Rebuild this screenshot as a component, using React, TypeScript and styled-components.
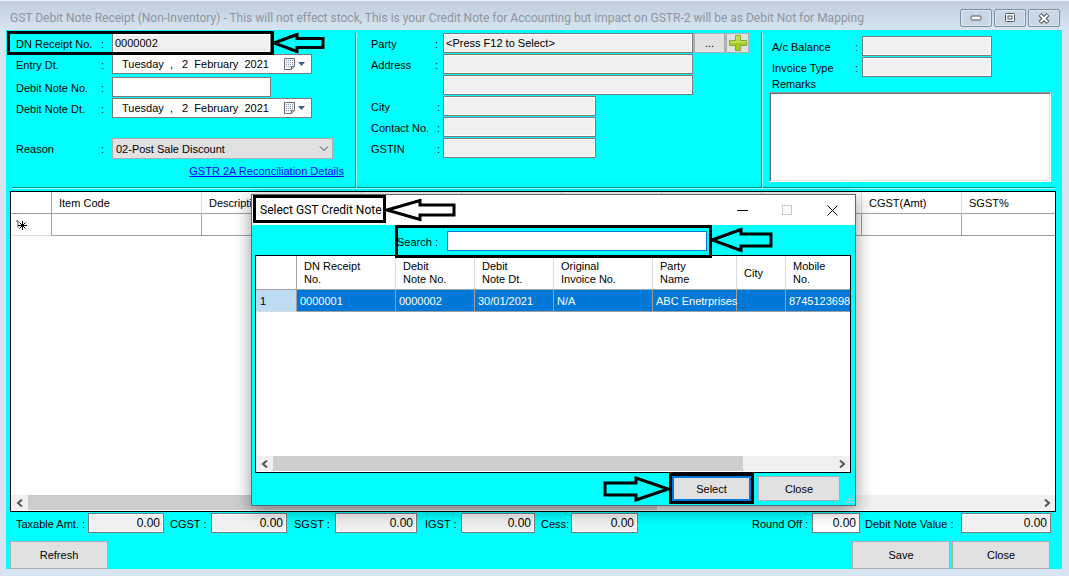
import React from "react";
import styled, { createGlobalStyle, css } from "styled-components";

const CYAN = "#00ffff";
const BLUE = "#0078d7";
const UI_FONT = '"Liberation Sans", Arial, sans-serif';
const TITLE_FONT = 'Roboto, "Noto Sans", sans-serif';

const GlobalStyle = createGlobalStyle`
  *, *::before, *::after { box-sizing: border-box; }
  body { margin: 0; background: #d7e4f2; }
  body, button, input, select, textarea { font-family: ${UI_FONT}; font-size: 11px; line-height: 14px; color: #000; }
  button, input, select, textarea { margin: 0; border-radius: 0; outline: none; }
`;

/* ---------- window frame ---------- */

const Window = styled.div`
  position: relative;
  display: flex;
  flex-direction: column;
  min-height: 100vh;
  padding: 0 7px 7px 6px;
  background: #d7e4f2;
  border-top: 1px solid #eef3f8;
`;

const TitleBar = styled.header`
  display: flex;
  align-items: center;
  height: 29px;
  margin: 0 -7px 0 -6px;
  padding: 5px 9px 0 10px;
  background: linear-gradient(#bfcddb, #d7e4f2);
`;

const WindowTitle = styled.h1`
  flex: 1;
  margin: 0;
  overflow: hidden;
  white-space: nowrap;
  font: 400 12px/16px ${TITLE_FONT};
  color: #8f959c;
`;

const Captions = styled.div`
  display: flex;
  gap: 2px;
`;

const CaptionButton = styled.button`
  display: flex;
  align-items: center;
  justify-content: center;
  width: 32px;
  height: 18px;
  padding: 0;
  border: 1px solid #7f8da3;
  border-radius: 2px;
  background: #c9d6e5;
  box-shadow: inset 0 0 0 1px #dde7f2;
`;

const Body = styled.main`
  display: flex;
  flex: 1;
  flex-direction: column;
  padding: 3px 6px 0 4px;
  background: ${CYAN};
`;

/* ---------- form area ---------- */

const FormArea = styled.section`
  display: grid;
  grid-template-columns: 345fr 406fr 292fr;
  height: 156px;
  margin: 0 1px 2px 2px;
  border-bottom: 1px solid #a8ffff;
  box-shadow: inset 0 -1px 0 #009c9c;
`;

const Column = styled.div<{ $left: number; $top?: number; $last?: boolean }>`
  display: flex;
  flex-direction: column;
  min-width: 0;
  padding: ${(p) => p.$top ?? 0}px 0 0 ${(p) => p.$left}px;
  ${(p) =>
    !p.$last &&
    css`
      border-right: 1px solid #a8ffff;
      box-shadow: inset -1px 0 0 #009c9c;
    `}
`;

const Group = styled.div<{ $gap?: number; $indent?: number }>`
  display: flex;
  flex-direction: column;
  align-items: flex-start;
  gap: 1px;
  margin-bottom: ${(p) => p.$gap ?? 0}px;
  padding-left: ${(p) => p.$indent ?? 0}px;
`;

const Row = styled.div<{ $indent?: number }>`
  display: flex;
  align-items: center;
  padding-left: ${(p) => p.$indent ?? 0}px;
`;

const Label = styled.label<{ $width: number; $colon?: number }>`
  display: flex;
  flex: none;
  justify-content: space-between;
  width: ${(p) => p.$width}px;
  padding: 1px ${(p) => p.$colon ?? 8}px 0 0;
  white-space: nowrap;
`;

const Field = styled.input<{ $width: number; $editable?: boolean }>`
  width: ${(p) => p.$width}px;
  height: 20px;
  padding: 0 2px;
  border: 1px solid #7a7a7a;
  background: ${(p) => (p.$editable ? "#fff" : "#f0f0f0")};
  box-shadow: inset 0 0 0 1px #fff;
`;

const DateBox = styled.div`
  display: flex;
  align-items: center;
  width: 200px;
  height: 20px;
  border: 1px solid #7a7a7a;
  background: #fff;
`;

const DateInput = styled.input`
  flex: 1;
  min-width: 0;
  padding: 0 0 0 9px;
  border: 0;
  background: transparent;
  white-space: pre;
`;

const DateButton = styled.button`
  display: flex;
  width: 28px;
  padding: 0;
  border: 0;
  background: transparent;
`;

const SelectBox = styled.div`
  position: relative;
  width: 221px;
`;

const Select = styled.select`
  display: block;
  width: 100%;
  height: 21px;
  padding: 0 18px 0 3px;
  appearance: none;
  border: 1px solid #adadad;
  background: #e1e1e1;
`;

const SelectArrow = styled.svg`
  position: absolute;
  top: 8px;
  right: 4px;
  pointer-events: none;
`;

const ReportLink = styled.a`
  align-self: flex-end;
  margin: 5px 12px 0 0;
  color: #0000ff;
`;

const PickButton = styled.button<{ $width: number }>`
  display: flex;
  align-items: center;
  justify-content: center;
  width: ${(p) => p.$width}px;
  height: 20px;
  margin-left: 1px;
  padding: 0;
  border: 1px solid #adadad;
  background: #e1e1e1;
`;

const RemarksLabel = styled.label`
  padding-left: 3px;
`;

const Remarks = styled.textarea`
  display: block;
  height: 90px;
  margin: 1px 4px 0 0;
  padding: 2px;
  resize: none;
  border: 1px solid;
  border-color: #a0a0a0 #fff #fff #a0a0a0;
  background: #fff;
  box-shadow: inset 1px 1px 0 #696969, inset -1px -1px 0 #e3e3e3;
`;

/* ---------- data grids ---------- */

const GridFrame = styled.div`
  display: flex;
  flex: 1;
  flex-direction: column;
  min-width: 0;
  overflow: hidden;
  border: 1px solid #000;
  background: #fff;
`;

const GridArea = styled.div`
  flex: 1;
  overflow: hidden;
`;

const Grid = styled.table<{ $width: number }>`
  width: ${(p) => p.$width}px;
  table-layout: fixed;
  border-collapse: separate;
  border-spacing: 0;
`;

const HeadCell = styled.th<{ $tall?: boolean }>`
  height: ${(p) => (p.$tall ? 34 : 22)}px;
  padding: 1px 0 0 7px;
  border-right: 1px solid #dcdcdc;
  border-bottom: 1px solid #a0a0a0;
  font-weight: 400;
  line-height: 13px;
  text-align: left;
  white-space: pre;
  &:first-child { border-right-color: #a0a0a0; }
`;

const Cell = styled.td<{ $selected?: boolean }>`
  height: 22px;
  padding: 0 0 0 3px;
  border-right: 1px solid #a0a0a0;
  border-bottom: 1px solid #a0a0a0;
  white-space: nowrap;
  ${(p) =>
    p.$selected &&
    css`
      background: ${BLUE};
      color: #fff;
    `}
`;

const RowHead = styled.th<{ $selected?: boolean }>`
  height: 22px;
  padding: 0 0 0 4px;
  border-right: 1px solid #a0a0a0;
  border-bottom: 1px solid #dcdcdc;
  background: ${(p) => (p.$selected ? "#bcdcf4" : "#fff")};
  font-weight: 400;
  text-align: left;
  svg { display: block; }
`;

const ScrollBar = styled.div`
  display: flex;
  height: 16px;
  border-bottom: 1px solid #fff;
  background: #f0f0f0;
`;

const ScrollButton = styled.button`
  display: flex;
  align-items: center;
  justify-content: center;
  width: 17px;
  padding: 0;
  border: 0;
  background: transparent;
`;

const ScrollTrack = styled.div`
  flex: 1;
`;

const Thumb = styled.div<{ $share: number }>`
  width: ${(p) => p.$share}%;
  height: 100%;
  background: #cdcdcd;
`;

/* ---------- totals and actions ---------- */

const Totals = styled.div`
  display: flex;
  align-items: center;
  margin: 1px 5px 8px 6px;
`;

const Amount = styled(Field)`
  padding: 0 3px;
  font-size: 12px;
  text-align: right;
`;

const Spacer = styled.div`
  flex: 1;
`;

const Actions = styled.div`
  display: flex;
  gap: 2px;
  margin-right: 6px;
`;

const Button = styled.button<{ $width: number; $height: number; $focused?: boolean }>`
  width: ${(p) => p.$width}px;
  height: ${(p) => p.$height}px;
  padding: 0;
  border: ${(p) => (p.$focused ? `2px solid ${BLUE}` : "1px solid #adadad")};
  background: #e1e1e1;
`;

/* ---------- highlight boxes with pointers ---------- */

const Marked = styled.div`
  position: relative;
  display: flex;
  align-items: center;
`;

const Frame = styled.span<{ $inset: string }>`
  position: absolute;
  z-index: 1;
  inset: ${(p) => p.$inset};
  border: 3px solid #000;
  pointer-events: none;
`;

const PointerSvg = styled.svg<{ $side: "left" | "right"; $gap: number }>`
  position: absolute;
  z-index: 2;
  top: 50%;
  ${(p) => (p.$side === "right" ? "left" : "right")}: calc(100% + ${(p) => p.$gap}px);
  transform: translateY(-50%);
  pointer-events: none;
`;

type PointerProps = {
  side: "left" | "right";
  width: number;
  height: number;
  head: number;
  body: number;
  gap: number;
};

function Pointer({ side, width: w, height: h, head, body, gap }: PointerProps) {
  const m = h / 2;
  const pts =
    side === "right"
      ? [[2, m], [head, 2], [head, m - body / 2], [w - 2, m - body / 2], [w - 2, m + body / 2], [head, m + body / 2], [head, h - 2]]
      : [[w - 2, m], [w - head, 2], [w - head, m - body / 2], [2, m - body / 2], [2, m + body / 2], [w - head, m + body / 2], [w - head, h - 2]];
  return (
    <PointerSvg $side={side} $gap={gap} width={w} height={h} aria-hidden="true">
      <polygon points={pts.map((p) => p.join(",")).join(" ")} fill="none" stroke="#000" strokeWidth="3" />
    </PointerSvg>
  );
}

/* ---------- dialog ---------- */

const Dialog = styled.section`
  position: absolute;
  top: 193px;
  left: 251px;
  z-index: 5;
  display: flex;
  flex-direction: column;
  width: 605px;
  height: 312px;
  border: 1px solid #5c6a6c;
  background: ${CYAN};
  box-shadow: 0 4px 16px rgba(0, 0, 0, 0.42);
`;

const DialogBar = styled.header`
  display: flex;
  align-items: center;
  justify-content: space-between;
  height: 30px;
  padding: 0 0 0 8px;
  background: #fff;
`;

const DialogTitle = styled.h2`
  margin: 0;
  font: 400 12px/16px ${TITLE_FONT};
  white-space: nowrap;
`;

const DialogControls = styled.div`
  display: flex;
`;

const DialogControl = styled.button`
  display: flex;
  align-items: center;
  justify-content: center;
  width: 45px;
  height: 30px;
  padding: 0;
  border: 0;
  background: transparent;
`;

const SearchBar = styled.div`
  display: flex;
  justify-content: center;
  height: 30px;
`;

const SearchBox = styled(Marked)`
  width: 317px;
  padding: 2px 5px 0 2px;
`;

const SearchInput = styled.input`
  flex: 1;
  min-width: 0;
  height: 20px;
  border: 1px solid ${BLUE};
  background: #fff;
`;

const DialogGrid = styled(GridFrame)`
  margin: 0 4px 0 3px;
`;

const DialogFooter = styled.footer`
  display: flex;
  justify-content: flex-end;
  gap: 7px;
  padding: 3px 15px 4px 0;
`;

const Grip = styled.svg`
  position: absolute;
  right: 1px;
  bottom: 1px;
`;

/* ---------- pieces ---------- */

function Chevron({ dir }: { dir: "left" | "right" }) {
  return (
    <svg width="8" height="8" aria-hidden="true">
      <path d={dir === "left" ? "M6 0.500L2 4L6 7.500" : "M2 0.500L6 4L2 7.500"} fill="none" stroke="#555" strokeWidth="2" />
    </svg>
  );
}

function HScroll({ share }: { share: number }) {
  return (
    <ScrollBar>
      <ScrollButton type="button" aria-label="Scroll left"><Chevron dir="left" /></ScrollButton>
      <ScrollTrack><Thumb $share={share} /></ScrollTrack>
      <ScrollButton type="button" aria-label="Scroll right"><Chevron dir="right" /></ScrollButton>
    </ScrollBar>
  );
}

function DateField({ id, value }: { id: string; value: string }) {
  return (
    <DateBox>
      <DateInput id={id} defaultValue={value} />
      <DateButton type="button" aria-label="Open calendar">
        <svg width="24" height="12" aria-hidden="true">
          <path d="M1.500 0.500H11.500V8.500L8.500 11.500H1.500Z" fill="#f4f4f6" stroke="#6e6a78" />
          <path d="M3 2.500H10M3 4.500H10M3 6.500H10M3 8.500H8" stroke="#8fa0c0" strokeDasharray="1 1" />
          <path d="M8.500 11.500V8.500H11.500" fill="#c8c4cc" stroke="#6e6a78" />
          <path d="M15 4H22L18.500 8Z" fill="#3f5f8f" />
        </svg>
      </DateButton>
    </DateBox>
  );
}

const itemColumns: [string, number][] = [
  ["", 41], ["Item Code", 150], ["Description", 160], ["", 100], ["", 100],
  ["", 100], ["", 100], ["", 100], ["CGST(Amt)", 100], ["SGST%", 100],
];

const noteColumns: [string, number][] = [
  ["", 41], ["DN Receipt\nNo.", 99], ["Debit\nNote No.", 79], ["Debit\nNote Dt.", 79],
  ["Original\nInvoice No.", 99], ["Party\nName", 84], ["City", 49], ["Mobile\nNo.", 70],
];

const note = ["0000001", "0000002", "30/01/2021", "N/A", "ABC Enetrprises", "", "8745123698"];

const totals: [string, string, number, number, number][] = [
  ["taxable", "Taxable Amt. :", 72, 76, 6],
  ["cgst", "CGST :", 41, 76, 7],
  ["sgst", "SGST :", 41, 82, 8],
  ["igst", "IGST :", 36, 74, 6],
  ["cess", "Cess:", 30, 67, 0],
];

const TotalLabel = styled.label<{ $width: number }>`
  width: ${(p) => p.$width}px;
  padding-top: 2px;
  white-space: nowrap;
`;

const TotalItem = styled.div<{ $gap: number }>`
  display: flex;
  align-items: center;
  margin-right: ${(p) => p.$gap}px;
`;

export default function App() {
  return (
    <>
      <GlobalStyle />
      <Window>
        <TitleBar>
          <WindowTitle>
            GST Debit Note Receipt (Non-Inventory) - This will not effect stock, This is your Credit Note for Accounting but impact on GSTR-2 will be as Debit Not for Mapping
          </WindowTitle>
          <Captions>
            <CaptionButton type="button" aria-label="Minimize">
              <svg width="12" height="6"><rect x="1" y="1" width="10" height="4" rx="1" fill="#fff" stroke="#50545e" /></svg>
            </CaptionButton>
            <CaptionButton type="button" aria-label="Restore">
              <svg width="12" height="10">
                <rect x="1.500" y="0.500" width="9" height="8" rx="1" fill="#fff" stroke="#50545e" />
                <rect x="4" y="3" width="4" height="3" fill="#fff" stroke="#50545e" />
              </svg>
            </CaptionButton>
            <CaptionButton type="button" aria-label="Close window">
              <svg width="14" height="11">
                <path d="M3 1.500L11 9.500M11 1.500L3 9.500" stroke="#50545e" strokeWidth="4" />
                <path d="M3.500 2L10.500 9M10.500 2L3.500 9" stroke="#fff" strokeWidth="2" />
              </svg>
            </CaptionButton>
          </Captions>
        </TitleBar>

        <Body>
          <FormArea>
            <Column $left={4}>
              <Group $gap={3}>
                <Marked>
                  <Label htmlFor="dn" $width={96}>DN Receipt No.<span>:</span></Label>
                  <Field id="dn" $width={159} defaultValue="0000002" readOnly />
                  <Frame $inset="-2px -3px -2px -9px" />
                  <Pointer side="right" width={53} height={21} head={25} body={9} gap={1} />
                </Marked>
                <Row>
                  <Label htmlFor="entry" $width={96}>Entry Dt.<span>:</span></Label>
                  <DateField id="entry" value="Tuesday  ,   2  February  2021" />
                </Row>
              </Group>
              <Group $gap={20}>
                <Row>
                  <Label htmlFor="dno" $width={96}>Debit Note No.<span>:</span></Label>
                  <Field id="dno" $width={159} $editable />
                </Row>
                <Row>
                  <Label htmlFor="ddt" $width={96}>Debit Note Dt.<span>:</span></Label>
                  <DateField id="ddt" value="Tuesday  ,   2  February  2021" />
                </Row>
              </Group>
              <Row>
                <Label htmlFor="reason" $width={96}>Reason<span>:</span></Label>
                <SelectBox>
                  <Select id="reason"><option>02-Post Sale Discount</option></Select>
                  <SelectArrow width="10" height="6" aria-hidden="true">
                    <path d="M1 0.500L5 4.500L9 0.500" fill="none" stroke="#444" />
                  </SelectArrow>
                </SelectBox>
              </Row>
              <ReportLink href="#reconciliation">GSTR 2A Reconciliation Details</ReportLink>
            </Column>

            <Column $left={14}>
              <Group>
                <Row>
                  <Label htmlFor="party" $width={72} $colon={5}>Party<span>:</span></Label>
                  <Field id="party" $width={250} defaultValue="<Press F12 to Select>" readOnly />
                  <PickButton type="button" $width={31}>...</PickButton>
                  <PickButton type="button" $width={23} aria-label="Add party">
                    <svg width="18" height="16">
                      <path d="M6.500 0.500H11.500V5.500H17.500V10.500H11.500V15.500H6.500V10.500H0.500V5.500H6.500Z" fill="#a3cc2b" stroke="#86a934" />
                      <path d="M7 1H11V6H17V8H1V6H7Z" fill="#bfdc4f" />
                    </svg>
                  </PickButton>
                </Row>
                <Row>
                  <Label htmlFor="addr1" $width={72} $colon={5}>Address<span>:</span></Label>
                  <Field id="addr1" $width={250} readOnly />
                </Row>
                <Row $indent={72}>
                  <Field aria-label="Address line two" $width={250} readOnly />
                </Row>
                <Row>
                  <Label htmlFor="city" $width={72} $colon={3}>City<span>:</span></Label>
                  <Field id="city" $width={153} readOnly />
                </Row>
                <Row>
                  <Label htmlFor="contact" $width={72} $colon={3}>Contact No.<span>:</span></Label>
                  <Field id="contact" $width={153} readOnly />
                </Row>
                <Row>
                  <Label htmlFor="gstin" $width={72} $colon={3}>GSTIN<span>:</span></Label>
                  <Field id="gstin" $width={153} readOnly />
                </Row>
              </Group>
            </Column>

            <Column $left={6} $top={3} $last>
              <Group $indent={3}>
                <Row>
                  <Label htmlFor="balance" $width={90} $colon={4}>A/c Balance<span>:</span></Label>
                  <Field id="balance" $width={130} readOnly />
                </Row>
                <Row>
                  <Label htmlFor="itype" $width={90} $colon={4}>Invoice Type<span>:</span></Label>
                  <Field id="itype" $width={130} readOnly />
                </Row>
              </Group>
              <RemarksLabel htmlFor="remarks">Remarks</RemarksLabel>
              <Remarks id="remarks" />
            </Column>
          </FormArea>

          <GridFrame>
            <GridArea>
              <Grid $width={1051}>
                <colgroup>{itemColumns.map(([, w], i) => <col key={i} width={w} />)}</colgroup>
                <thead>
                  <tr>{itemColumns.map(([name], i) => <HeadCell key={i}>{name}</HeadCell>)}</tr>
                </thead>
                <tbody>
                  <tr>
                    <RowHead aria-label="New row">
                      <svg width="14" height="12" aria-hidden="true">
                        <path d="M1 2.500L3 1.500V9" fill="none" stroke="#555" />
                        <path d="M7.500 2V11M3 6.500H12M4.500 3.500L10.500 9.500M10.500 3.500L4.500 9.500" fill="none" stroke="#000" />
                      </svg>
                    </RowHead>
                    {itemColumns.slice(1).map((_, i) => <Cell key={i} />)}
                  </tr>
                </tbody>
              </Grid>
            </GridArea>
            <HScroll share={62.3} />
          </GridFrame>

          <Totals>
            {totals.map(([id, name, lw, fw, gap]) => (
              <TotalItem key={id} $gap={gap}>
                <TotalLabel htmlFor={id} $width={lw}>{name}</TotalLabel>
                <Amount id={id} $width={fw} defaultValue="0.00" readOnly />
              </TotalItem>
            ))}
            <Spacer />
            <TotalItem $gap={5}>
              <TotalLabel htmlFor="round" $width={60}>Round Off :</TotalLabel>
              <Amount id="round" $width={48} $editable defaultValue="0.00" />
            </TotalItem>
            <TotalItem $gap={0}>
              <TotalLabel htmlFor="value" $width={96}>Debit Note Value :</TotalLabel>
              <Amount id="value" $width={90} defaultValue="0.00" readOnly />
            </TotalItem>
          </Totals>

          <Actions>
            <Button type="button" $width={98} $height={28}>Refresh</Button>
            <Spacer />
            <Button type="button" $width={98} $height={28}>Save</Button>
            <Button type="button" $width={98} $height={28}>Close</Button>
          </Actions>
        </Body>

        <Dialog role="dialog" aria-labelledby="dialog-title">
          <DialogBar>
            <Marked>
              <DialogTitle id="dialog-title">Select GST Credit Note</DialogTitle>
              <Frame $inset="-7px -4px -5px -7px" />
              <Pointer side="right" width={71} height={23} head={35} body={10} gap={3} />
            </Marked>
            <DialogControls>
              <DialogControl type="button" aria-label="Minimize dialog">
                <svg width="11" height="11"><path d="M0 5.500H11" stroke="#000" /></svg>
              </DialogControl>
              <DialogControl type="button" aria-label="Maximize dialog" disabled>
                <svg width="11" height="11"><rect x="0.500" y="0.500" width="9" height="9" fill="none" stroke="#c8c8c8" /></svg>
              </DialogControl>
              <DialogControl type="button" aria-label="Close dialog">
                <svg width="11" height="11"><path d="M0.500 0.500L10.500 10.500M10.500 0.500L0.500 10.500" stroke="#000" /></svg>
              </DialogControl>
            </DialogControls>
          </DialogBar>

          <SearchBar>
            <SearchBox>
              <TotalLabel htmlFor="search" $width={50}>Search :</TotalLabel>
              <SearchInput id="search" />
              <Frame $inset="0 0 -3px 0" />
              <Pointer side="right" width={63} height={25} head={31} body={12} gap={-2} />
            </SearchBox>
          </SearchBar>

          <DialogGrid>
            <GridArea>
              <Grid $width={600}>
                <colgroup>{noteColumns.map(([, w], i) => <col key={i} width={w} />)}</colgroup>
                <thead>
                  <tr>{noteColumns.map(([name], i) => <HeadCell key={i} $tall>{name}</HeadCell>)}</tr>
                </thead>
                <tbody>
                  <tr>
                    <RowHead $selected>1</RowHead>
                    {note.map((v, i) => <Cell key={i} $selected>{v}</Cell>)}
                  </tr>
                </tbody>
              </Grid>
            </GridArea>
            <HScroll share={84} />
          </DialogGrid>

          <DialogFooter>
            <Marked>
              <Button type="button" $width={79} $height={25} $focused>Select</Button>
              <Frame $inset="-3px" />
              <Pointer side="left" width={67} height={26} head={34} body={12} gap={2} />
            </Marked>
            <Button type="button" $width={82} $height={25}>Close</Button>
          </DialogFooter>
          <Grip width="9" height="9" aria-hidden="true">
            <path d="M6 0h2v2h-2zM3 3h2v2h-2zM6 3h2v2h-2zM0 6h2v2h-2zM3 6h2v2h-2zM6 6h2v2h-2z" fill="#b8c4c4" />
          </Grip>
        </Dialog>
      </Window>
    </>
  );
}
